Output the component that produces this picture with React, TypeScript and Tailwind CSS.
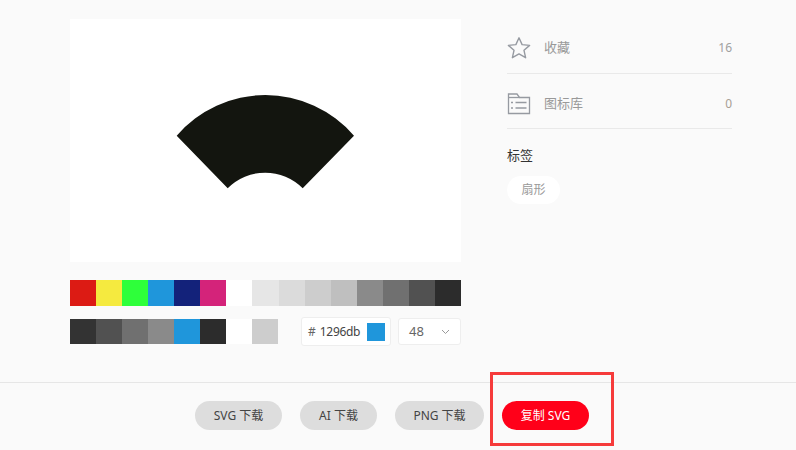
const row1 = ["#dc1b14","#f5ea3f","#2eff3a","#1f96db","#13227a","#d4237a","#ffffff","#e6e6e6","#dbdbdb","#cdcdcd","#bfbfbf","#8a8a8a","#707070","#515151","#2c2c2c"];
const row2 = ["#333333","#515151","#707070","#8a8a8a","#1f96db","#2c2c2c","#ffffff","#cdcdcd"];
const font = "[font-family:'Noto_Sans','Noto_Sans_CJK_SC',sans-serif]";

export default function App() {
  return (
    <div className={`relative w-[796px] h-[450px] overflow-hidden bg-[#fafafa] ${font}`}>
      <div className="flex h-[382px] pt-[19px] pl-[70px]">
        <div className="w-[391px]">
          <div className="h-[243px] bg-white flex items-center justify-center">
            <svg width="391" height="243" viewBox="70 19 391 243">
              <path d="M176.7 135.7 A117 117 0 0 1 354 135.7 L302.7 188.3 A52.8 52.8 0 0 0 227.7 188.3 Z" fill="#13150f" />
            </svg>
          </div>
          <div className="flex mt-[18px]">
            {row1.map((c, i) => (
              <div key={i} className="flex-1 h-[26px]" style={{ backgroundColor: c }} />
            ))}
          </div>
          <div className="flex items-center mt-[11px]">
            <div className="flex w-[231px]">
              {row2.map((c, i) => (
                <div key={i} className="w-[26px] h-[25px]" style={{ backgroundColor: c }} />
              ))}
            </div>
            <div className="flex items-center w-[90px] h-[29px] bg-white border border-[#eeeeee] rounded-[3px] pl-[6px] text-[12px] text-[#444444]">
              <span className="text-[#666666] mr-[4px]">#</span>
              <span className="tracking-[-0.3px]">1296db</span>
              <div className="w-[18px] h-[18px] ml-[7px] bg-[#1f96db]" />
            </div>
            <div className="flex items-center justify-between w-[63px] h-[27px] ml-[7px] bg-white border border-[#eeeeee] rounded-[3px] pl-[10px] pr-[10px] text-[13px] text-[#666666]">
              <span>48</span>
              <svg width="9" height="6" viewBox="0 0 9 6" fill="none" stroke="#999999" strokeWidth="1">
                <path d="M1 1 L4.5 4.5 L8 1" />
              </svg>
            </div>
          </div>
        </div>
        <div className="w-[225px] ml-[46px] -mt-[19px]">
          <div className="flex items-center h-[74px] border-b border-[#e9e9e9] pt-[22px]">
            <svg width="24" height="24" viewBox="0 0 24 24" fill="none" stroke="#969aa1" strokeWidth="1.4" strokeLinejoin="round">
              <path d="M12 1.8 L15.1 8.6 L22.6 9.4 L17 14.3 L18.6 21.7 L12 17.9 L5.4 21.7 L7 14.3 L1.4 9.4 L8.9 8.6 Z" />
            </svg>
            <span className="ml-[13px] text-[13px] text-[#999999]">收藏</span>
            <span className="ml-auto text-[12px] text-[#a0a0a0]">16</span>
          </div>
          <div className="flex items-center h-[55px] border-b border-[#e9e9e9] pt-[6px]">
            <svg width="24" height="22" viewBox="0 0 24 22" fill="none" stroke="#969aa1" strokeWidth="1.3">
              <path d="M1.5 20.5 V1 H10 L12.5 4.5 H22.5 V20.5 Z" />
              <path d="M1.5 4.5 H12.5" />
              <path d="M4 9.5 H6 M4 15 H6 M8.5 9.5 H19.5 M8.5 15 H19.5" />
            </svg>
            <span className="ml-[13px] text-[13px] text-[#999999]">图标库</span>
            <span className="ml-auto text-[12px] text-[#a89f94]">0</span>
          </div>
          <div className="mt-[17px] text-[13px] leading-[18px] text-[#333333]">标签</div>
          <div className="mt-[12px] w-[53px] h-[28px] rounded-[14px] bg-white flex items-center justify-center text-[12px] text-[#999999]">扇形</div>
        </div>
      </div>
      <div className="border-t border-[#e6e6e6] flex pt-[18px] pl-[195px] gap-[18px] text-[12px]">
        <button className="w-[87px] h-[29px] rounded-full bg-[#dddddd] text-[#444444]">SVG 下载</button>
        <button className="w-[77px] h-[29px] rounded-full bg-[#dddddd] text-[#444444]">AI 下载</button>
        <button className="w-[89px] h-[29px] rounded-full bg-[#dddddd] text-[#444444]">PNG 下载</button>
        <button className="w-[87px] h-[29px] rounded-full bg-[#ff0019] text-white">复制 SVG</button>
      </div>
      <div className="absolute left-[490px] top-[372px] w-[124px] h-[74px] border-[3px] border-[#f63b3b]" />
    </div>
  );
}
